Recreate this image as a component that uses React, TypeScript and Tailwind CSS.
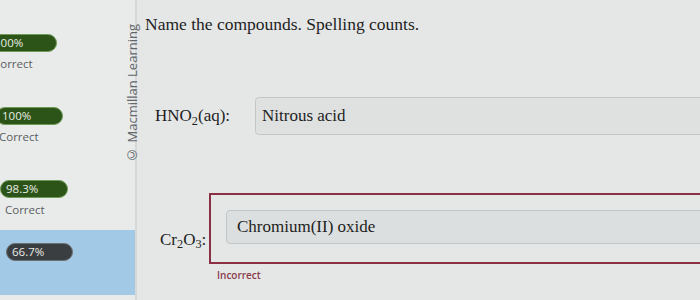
import React from "react";

// Sidebar progress items (offsets mimic the photo's slight skew)
const items = [
  { pct: "100%", sub: "Correct", ml: "ml-[-12px]", w: "w-[69px]", subMl: "ml-[-7px]" },
  { pct: "100%", sub: "Correct", ml: "ml-[-4px]", w: "w-[67px]", subMl: "ml-[-1px]" },
  { pct: "98.3%", sub: "Correct", ml: "ml-[0px]", w: "w-[68px]", subMl: "ml-[5px]" },
];

function Pill({ text, ml, w, tone }: { text: string; ml: string; w: string; tone: string }) {
  return (
    <div
      className={`${ml} ${w} h-[18px] rounded-full flex items-center pl-[5px] text-[11.5px] text-[#e8ece6] ${
        tone === "green"
          ? "bg-[#2c5419] border border-[#6f9a55]"
          : "bg-[#3b3e40] border border-[#6d7072]"
      }`}
    >
      {text}
    </div>
  );
}

const Sub = ({ children }: { children: React.ReactNode }) => (
  <span className="relative top-[0.3em] text-[0.72em]">{children}</span>
);

export default function App() {
  return (
    <div className="w-[700px] h-[300px] flex overflow-hidden bg-[#e5e7e7]">
      {/* sidebar */}
      <div className="w-[137px] shrink-0 flex flex-col bg-[#e9ebeb] border-r-2 border-[#d6d8d8] font-['Open_Sans',sans-serif]">
        <div className="pt-[34px] flex flex-col gap-[36px]">
          {items.map((it, i) => (
            <div key={i} className="flex flex-col">
              <Pill text={it.pct} ml={it.ml} w={it.w} tone="green" />
              <span className={`${it.subMl} mt-[5px] text-[11.5px] leading-[14px] text-[#5a5d5e]`}>
                {it.sub}
              </span>
            </div>
          ))}
        </div>
        <div className="mt-[13px] h-[65px] bg-[#a2c9e6] pt-[13px]">
          <Pill text="66.7%" ml="ml-[6px]" w="w-[67px]" tone="gray" />
        </div>
      </div>

      {/* watermark */}
      <div className="-ml-[14px] w-[18px] shrink-0 pt-[24px]">
        <span className="block [writing-mode:vertical-rl] rotate-180 text-[13px] leading-[18px] text-[#63676a] font-['Open_Sans',sans-serif] whitespace-nowrap">
          © Macmillan Learning
        </span>
      </div>

      {/* question */}
      <div className="flex-1 pl-[4px] pt-[13px] font-['Liberation_Serif',serif] text-[#1e1e1e]">
        <h1 className="text-[17.5px] leading-[22px]">Name the compounds. Spelling counts.</h1>

        <div className="mt-[62px] flex items-center">
          <span className="w-[110px] pl-[10px] text-[17px]">
            HNO<Sub>2</Sub>(aq):
          </span>
          <div className="w-[480px] h-[38px] rounded-[4px] border border-[#c3c6c6] bg-[#dfe1e1] flex items-center pl-[6px] text-[17px]">
            Nitrous acid
          </div>
        </div>

        <div className="mt-[58px] flex">
          <span className="w-[64px] pl-[15px] self-end mb-[12px] text-[17px]">
            Cr<Sub>2</Sub>O<Sub>3</Sub>:
          </span>
          <div className="w-[520px] h-[71px] border-2 border-[#8b2f42] pt-[15px] pl-[15px]">
            <div className="h-[34px] rounded-[4px] border border-[#c3c6c6] bg-[#dcdfdf] flex items-center pl-[10px] text-[17px]">
              Chromium(II) oxide
            </div>
          </div>
        </div>
        <div className="ml-[72px] mt-[5px] text-[10px] leading-[12px] font-semibold text-[#8a3a4b] font-['Open_Sans',sans-serif]">
          Incorrect
        </div>
      </div>
    </div>
  );
}
